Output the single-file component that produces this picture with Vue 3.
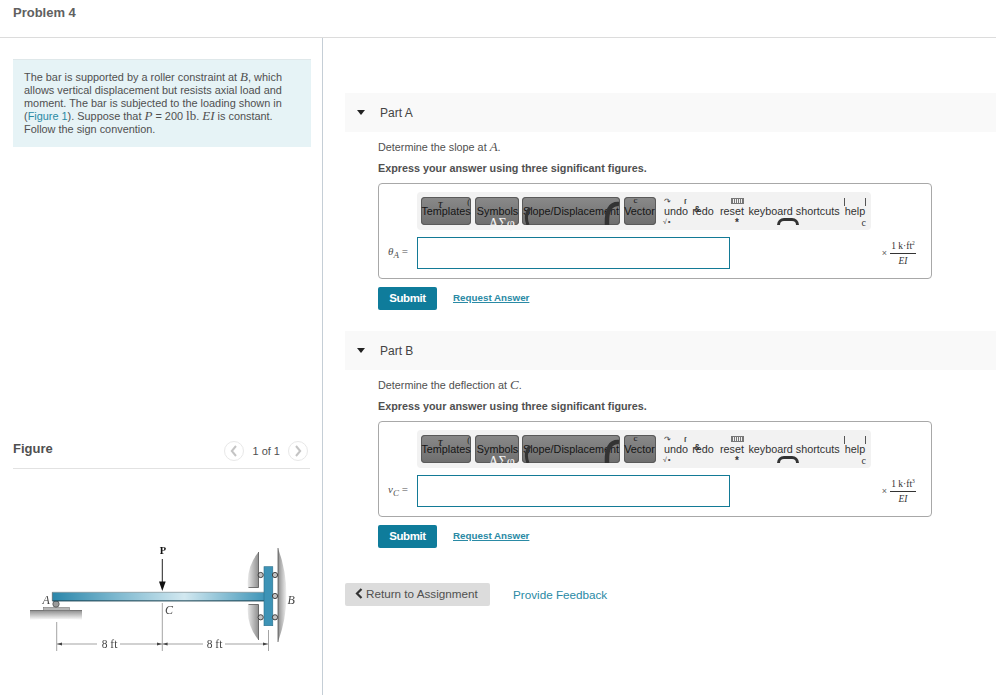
<template>
  <div class="page">
    <header class="top">Problem 4</header>
    <div class="main">
      <aside class="left">
        <div class="intro">
          The bar is supported by a roller constraint at <i class="m">B</i>, which allows vertical displacement but resists axial load and moment. The bar is subjected to the loading shown in (<a class="fig-link">Figure 1</a>). Suppose that <i class="m">P</i> = 200 <span class="m">lb</span>. <i class="m">EI</i> is constant. Follow the sign convention.
        </div>
        <div class="figure-head">
          <span class="figure-title">Figure</span>
          <div class="pager">
            <span class="round">
              <svg width="8" height="12" viewBox="0 0 8 12"><path d="M6 1 1.8 6 6 11" fill="none" stroke="#c4c4c4" stroke-width="2" /></svg>
            </span>
            <span class="pager-text">1 of 1</span>
            <span class="round">
              <svg width="8" height="12" viewBox="0 0 8 12"><path d="M2 1 6.2 6 2 11" fill="none" stroke="#c4c4c4" stroke-width="2" /></svg>
            </span>
          </div>
        </div>
        <svg class="diagram" width="290" height="125" viewBox="0 0 290 125" xmlns="http://www.w3.org/2000/svg">
          <defs>
            <linearGradient id="beam" x1="0" x2="1" y1="0" y2="0">
              <stop offset="0" stop-color="#2a86aa" />
              <stop offset="0.3" stop-color="#7db8cf" />
              <stop offset="0.62" stop-color="#d2e8f0" />
              <stop offset="1" stop-color="#3f95b8" />
            </linearGradient>
            <linearGradient id="ground" x1="0" x2="0" y1="0" y2="1">
              <stop offset="0" stop-color="#8f8f8f" />
              <stop offset="1" stop-color="#ffffff" />
            </linearGradient>
            <linearGradient id="wallL" x1="0" x2="1" y1="0" y2="0">
              <stop offset="0" stop-color="#e8e8e8" />
              <stop offset="1" stop-color="#8f8f8f" />
            </linearGradient>
            <linearGradient id="wallR" x1="0" x2="1" y1="0" y2="0">
              <stop offset="0" stop-color="#8f8f8f" />
              <stop offset="1" stop-color="#f2f2f2" />
            </linearGradient>
          </defs>

          <!-- ground and roller at A -->
          <path d="M10 75.5H62V85Q36 83 10 85Z" fill="url(#ground)" />
          <path d="M10 75.5H62" stroke="#555" stroke-width="0.7" />
          <rect x="23.5" y="72.5" width="26" height="3" fill="#b5b5b5" stroke="#666" stroke-width="0.5" />
          <circle cx="36" cy="69" r="3.2" fill="#9a9a9a" stroke="#444" stroke-width="0.7" />

          <!-- walls at B -->
          <path d="M238.5 17Q226 32 228 52.5H238.5Z" fill="url(#wallL)" />
          <path d="M238.5 69.5V105Q226 90 228 69.5Z" fill="url(#wallL)" />
          <path d="M258 13Q275 60 258 107Z" fill="url(#wallR)" />
          <path d="M238.5 17V52.5H228.5M238.5 105V69.5H228.5M258 13V107" fill="none" stroke="#444" stroke-width="0.7" />

          <!-- beam -->
          <rect x="32.3" y="57.3" width="213" height="8.6" fill="url(#beam)" />
          <path d="M32.3 57.3H245" stroke="#7c8c92" stroke-width="0.7" />
          <path d="M32.3 65.9H245" stroke="#123c4c" stroke-width="1" />
          <path d="M32.3 57.3V65.9" stroke="#555" stroke-width="0.6" />
          <rect x="244" y="31.7" width="8.8" height="59" fill="#3d93b6" stroke="#2a6e8a" stroke-width="0.6" />

          <!-- rollers -->
          <g fill="#c4c4c4" stroke="#333" stroke-width="0.9">
            <circle cx="240.7" cy="40" r="2.6" />
            <circle cx="255" cy="40" r="2.6" />
            <circle cx="255" cy="61" r="2.6" />
            <circle cx="240.7" cy="82.3" r="2.6" />
            <circle cx="255" cy="82.3" r="2.6" />
          </g>

          <!-- load -->
          <path d="M142.3 24V48" stroke="#222" stroke-width="1" />
          <path d="M139 46.5H145.7L142.3 56Z" fill="#111" />
          <text x="143" y="18.5" class="t bold" text-anchor="middle">P</text>

          <!-- dimensions -->
          <path d="M36.7 87V116M142.3 68V116M248.5 95V116" stroke="#666" stroke-width="0.6" fill="none" />
          <path d="M37 109H77M100 109H142M142.5 109H183M205 109H248" stroke="#666" stroke-width="0.6" fill="none" />
          <path d="M37 109l5-1.5v3ZM142 109l-5-1.5v3ZM142.6 109l5-1.5v3ZM248 109l-5-1.5v3Z" fill="#444" />

          <text x="89.5" y="112.8" class="t" text-anchor="middle">8 ft</text>
          <text x="194.5" y="112.8" class="t" text-anchor="middle">8 ft</text>
          <text x="22.5" y="69" class="t it">A</text>
          <text x="145" y="79" class="t it">C</text>
          <text x="267.5" y="68.5" class="t it">B</text>
        </svg>
      </aside>

      <section class="right">
        <div v-for="part in parts" :key="part.name" class="part">
          <div class="part-bar">
            <span class="caret"></span>
            <span>{{ part.name }}</span>
          </div>
          <div class="part-body">
            <p class="question">{{ part.question }} <i class="m">{{ part.point }}</i>.</p>
            <p class="express">Express your answer using three significant figures.</p>
            <div class="answer">
              <div class="toolbar">
                <button class="tool dark">
                  <span class="g tau">τ</span><span class="g paren">(</span>Templates
                </button>
                <button class="tool dark">
                  Symbols<span class="g greek">ΑΣφ</span>
                </button>
                <button class="tool dark wide">
                  Slope/Displacement
                  <svg class="g arcs" width="98" height="28" viewBox="0 0 98 28">
                    <path d="M8 11Q2 18 6 28" fill="none" stroke="#333" stroke-width="3" />
                    <path d="M97 7Q84 6 85 28" fill="none" stroke="#333" stroke-width="4.5" />
                  </svg>
                </button>
                <button class="tool dark">
                  <span class="g vec">c</span>Vector
                </button>
                <button class="tool light undo">
                  <span class="g mark m1">↷</span><span class="g mark m2">√∘</span><span class="g mark m3">ſ</span>undo
                </button>
                <button class="tool light redo">
                  <span class="g amp">&amp;</span>redo
                </button>
                <button class="tool light reset">
                  <span class="g keys"></span><span class="g star">*</span>reset
                </button>
                <button class="tool light kb">
                  keyboard shortcuts<span class="g dome"></span>
                </button>
                <button class="tool light help">
                  <span class="g bar-l"></span><span class="g bar-r"></span><span class="g hook">c</span>help
                </button>
              </div>
              <div class="entry">
                <span class="label"><i>{{ part.sym }}</i><sub>{{ part.sub }}</sub> =</span>
                <div class="input"></div>
                <span class="units">
                  <span class="times">×</span>
                  <span class="frac">
                    <span class="num">1 k·ft<sup>{{ part.pow }}</sup></span>
                    <span class="den">EI</span>
                  </span>
                </span>
              </div>
            </div>
            <div class="actions">
              <button class="submit">Submit</button>
              <a class="request">Request Answer</a>
            </div>
          </div>
        </div>
        <div class="bottom">
          <button class="back">
            <svg width="8" height="11" viewBox="0 0 8 11"><path d="M6.5 1 2 5.5 6.5 10" fill="none" stroke="#333" stroke-width="2.2" /></svg>
            Return to Assignment
          </button>
          <a class="feedback">Provide Feedback</a>
        </div>
      </section>
    </div>
  </div>
</template>

<script setup>
const parts = [
  { name: 'Part A', question: 'Determine the slope at', point: 'A', sym: 'θ', sub: 'A', pow: 2 },
  { name: 'Part B', question: 'Determine the deflection at', point: 'C', sym: 'v', sub: 'C', pow: 3 },
]
</script>

<style>
html, body {
  margin: 0;
  background: #fff;
}
</style>

<style scoped>
.page {
  width: 996px;
  height: 695px;
  overflow: hidden;
  font-family: "Liberation Sans", Arial, sans-serif;
  color: #333;
  font-size: 11px;
}
.top {
  height: 32px;
  padding: 5px 0 0 13px;
  border-bottom: 1px solid #dcdcdc;
  font-size: 13px;
  font-weight: bold;
  line-height: 16px;
  color: #606060;
}
.main {
  display: flex;
  height: 657px;
}
.left {
  width: 322px;
  flex: none;
  border-right: 1px solid #c5ced6;
  padding-top: 21px;
}
.intro {
  width: 298px;
  height: 88px;
  box-sizing: border-box;
  margin-left: 13px;
  padding: 11px 11px 0;
  background: #e6f3f6;
  border-top: 1px solid #dfe8ea;
  font-size: 10.9px;
  line-height: 13px;
  color: #505050;
}
.m {
  font-family: "Liberation Serif", serif;
  font-size: 13px;
  line-height: 0;
}
.fig-link {
  color: #2a8aa5;
}
.figure-head {
  display: flex;
  align-items: center;
  justify-content: space-between;
  width: 297px;
  height: 38px;
  margin: 283px 0 0 13px;
  border-bottom: 1px solid #e2e2e2;
}
.figure-title {
  padding-bottom: 2px;
  font-size: 13px;
  font-weight: bold;
  color: #505050;
}
.pager {
  display: flex;
  align-items: center;
  gap: 8px;
  margin: 4px 2px 0 0;
  font-size: 11px;
  color: #505050;
}
.round {
  display: flex;
  align-items: center;
  justify-content: center;
  width: 20px;
  height: 20px;
  border: 1px solid #e8e8e8;
  border-radius: 50%;
  box-sizing: border-box;
}
.diagram {
  display: block;
  margin: 66px 0 0 20px;
  filter: blur(0.3px);
}
.t {
  font-family: "Liberation Serif", serif;
  font-size: 11.5px;
  fill: #444;
}
.t.bold {
  font-weight: bold;
  font-size: 10.5px;
  fill: #111;
}
.t.it {
  font-style: italic;
  font-size: 12px;
}

.right {
  flex: 1;
  padding: 55px 0 0 22px;
}
.part {
  margin-bottom: 21px;
}
.part-bar {
  display: flex;
  align-items: center;
  height: 39px;
  background: #f9f9f9;
  font-size: 12px;
  color: #444;
}
.caret {
  width: 0;
  height: 0;
  margin: 0 15px 0 12px;
  border-left: 4px solid transparent;
  border-right: 4px solid transparent;
  border-top: 5px solid #222;
}
.part-body {
  padding-left: 33px;
}
.question {
  margin: 8px 0 0;
  height: 15px;
  line-height: 15px;
  font-size: 10.8px;
  color: #505050;
}
.express {
  margin: 6px 0 0;
  height: 15px;
  line-height: 15px;
  font-size: 10.8px;
  font-weight: bold;
  color: #505050;
}
.answer {
  width: 554px;
  height: 96px;
  box-sizing: border-box;
  margin-top: 7px;
  padding: 8px 0 0 38px;
  border: 1px solid #a8a8a8;
  border-radius: 4px;
}
.toolbar {
  display: flex;
  align-items: center;
  width: 454px;
  height: 38px;
  box-sizing: border-box;
  padding-left: 4px;
  background: #f2f2f2;
  border-radius: 4px;
}
.tool {
  position: relative;
  height: 28px;
  padding: 0;
  border: 0;
  font-family: inherit;
  font-size: 10.8px;
  color: #222;
  white-space: nowrap;
  overflow: visible;
}
.dark {
  margin-right: 3.5px;
  background: linear-gradient(#8a8a8a, #6e6e6e);
  border-radius: 4px;
  box-shadow: inset 0 0 0 1px #5a5a5a;
  color: #151515;
}
.light {
  background: none;
  color: #333;
}
.dark:nth-child(1) { width: 50px; }
.dark:nth-child(2) { width: 44px; padding-left: 2px; }
.wide { width: 98px; }
.dark:nth-child(4) { width: 32px; }
.undo { width: 26px; margin-left: 4px; }
.redo { width: 22px; margin-left: 3px; }
.reset { width: 26px; margin-left: 5px; }
.kb { width: 92px; margin-left: 3px; }
.help { width: 22px; margin-left: 4px; }
.g {
  position: absolute;
  pointer-events: none;
}
.tau {
  top: -1px;
  left: 17px;
  font: italic 13px "Liberation Serif", serif;
  color: #222;
}
.paren {
  top: 1px;
  right: 1px;
  font: 8px "Liberation Serif", serif;
}
.greek {
  top: 20px;
  left: 14px;
  font: 14px/14px "Liberation Serif", serif;
  color: #f2f2f2;
}
.arcs {
  left: 0;
  top: 0;
}
.vec {
  top: -2px;
  left: 10px;
  font: 9px "Liberation Serif", serif;
}
.mark {
  font: 8px "Liberation Sans", sans-serif;
  color: #444;
}
.m1 { top: 0; left: 1px; }
.m2 { bottom: -1px; left: 0; font-size: 7px; }
.m3 { top: 0; left: 21px; font-weight: bold; }
.amp {
  top: 7px;
  left: 2px;
  font: bold 9px "Liberation Sans", sans-serif;
  color: #333;
}
.keys {
  top: 1px;
  left: 12px;
  width: 13px;
  height: 6px;
  border: 1px solid #777;
  box-sizing: border-box;
  background: repeating-linear-gradient(90deg, #777 0 1px, #f2f2f2 1px 2px);
}
.star {
  bottom: -3px;
  left: 16px;
  font: bold 10px "Liberation Sans", sans-serif;
}
.dome {
  left: 29px;
  bottom: 0;
  width: 22px;
  height: 7px;
  box-sizing: border-box;
  border: 3px solid #333;
  border-bottom: 0;
  border-radius: 12px 12px 0 0;
}
.bar-l,
.bar-r {
  top: 1px;
  width: 1px;
  height: 8px;
  background: #555;
}
.bar-l { left: 0; }
.bar-r { right: 0; }
.hook {
  right: 0;
  bottom: -3px;
  font: 10px "Liberation Serif", serif;
}
.entry {
  display: flex;
  align-items: center;
  width: 499px;
  margin-top: 7px;
}
.label {
  width: 0;
  flex: none;
  transform: translateX(-29px);
  white-space: nowrap;
  font-family: "Liberation Serif", serif;
  font-size: 11px;
  color: #505050;
}
.label sub {
  font-size: 9px;
  font-style: italic;
}
.input {
  width: 313px;
  height: 32px;
  box-sizing: border-box;
  border: 1px solid #137a96;
  background: #fff;
}
.units {
  display: flex;
  align-items: center;
  gap: 3px;
  margin-left: auto;
  font-family: "Liberation Serif", serif;
  color: #333;
}
.times {
  font-family: "Liberation Sans", sans-serif;
  font-size: 9px;
  color: #666;
}
.frac {
  display: flex;
  flex-direction: column;
  align-items: center;
  width: 26px;
  font-size: 9.5px;
  line-height: 10px;
}
.num {
  border-bottom: 1px solid #333;
  width: 100%;
  text-align: center;
  white-space: nowrap;
  padding-bottom: 2px;
}
.num sup {
  font-size: 5.5px;
  line-height: 0;
}
.den {
  font-style: italic;
  padding-top: 2px;
}
.actions {
  display: flex;
  align-items: center;
  gap: 16px;
  margin-top: 8px;
}
.submit {
  width: 59px;
  height: 23px;
  padding: 0 0 2px;
  border: 0;
  border-radius: 2px;
  background: #0f7c9b;
  color: #fff;
  font-family: inherit;
  font-size: 11.5px;
  font-weight: bold;
  letter-spacing: -0.4px;
}
.request {
  margin-bottom: 2px;
  font-size: 9.8px;
  font-weight: bold;
  color: #2a8aa5;
  text-decoration: underline;
}
.bottom {
  display: flex;
  align-items: center;
  gap: 23px;
  margin-top: 35px;
}
.back {
  display: flex;
  align-items: center;
  gap: 3px;
  width: 145px;
  height: 23px;
  padding: 0 0 2px 10px;
  border: 0;
  border-radius: 2px;
  background: #dcdcdc;
  color: #505050;
  font-family: inherit;
  font-size: 11.7px;
}
.feedback {
  margin-bottom: 1px;
  font-size: 11.7px;
  color: #2a8aa5;
}
</style>
